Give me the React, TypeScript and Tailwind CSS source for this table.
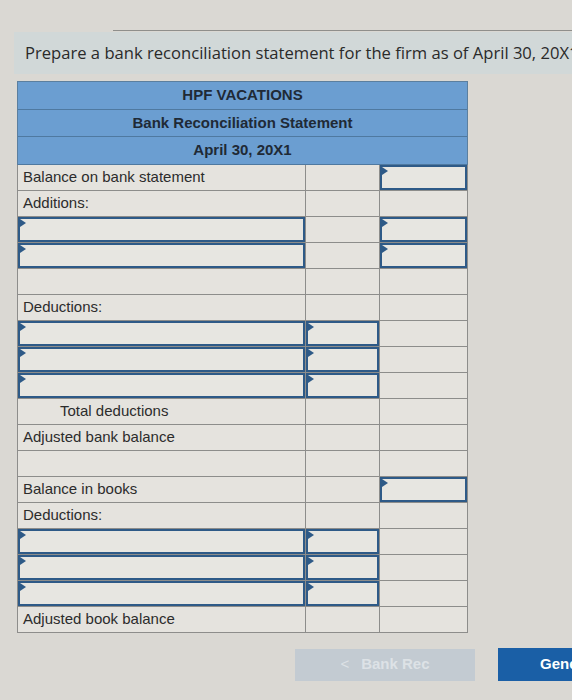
import React from "react";

type Row = {
    label?: string;
    indent?: boolean;
    a?: boolean;
    b?: boolean;
    c?: boolean;
};

const rows: Row[] = [
    { label: "Balance on bank statement", c: true },
    { label: "Additions:" },
    { a: true, c: true },
    { a: true, c: true },
    {},
    { label: "Deductions:" },
    { a: true, b: true },
    { a: true, b: true },
    { a: true, b: true },
    { label: "Total deductions", indent: true },
    { label: "Adjusted bank balance" },
    {},
    { label: "Balance in books", c: true },
    { label: "Deductions:" },
    { a: true, b: true },
    { a: true, b: true },
    { a: true, b: true },
    { label: "Adjusted book balance" },
];

function InputBox() {
    return (
        <div className="relative h-full w-full border-2 border-[#2e5a87] bg-[#e7e6e1]">
            <span className="absolute left-0 top-0 h-0 w-0 border-y-[4px] border-l-[6px] border-y-transparent border-l-[#2e5a87]" />
        </div>
    );
}

function Cell({ input, children, className }: { input?: boolean; children?: React.ReactNode; className?: string }) {
    return (
        <div className={"h-[26px] border-b border-r border-[#8d8d8b] " + (className ?? "")}>
            {input ? <InputBox /> : children}
        </div>
    );
}

export default function App() {
    return (
        <div
            className="relative h-[700px] w-[572px] overflow-hidden bg-[#dad8d3] text-[#2c2c2c]"
            style={{ fontFamily: '"Liberation Sans", Arial, sans-serif' }}
        >
            <div className="ml-[113px] h-[31px] border-b border-[#8f8f8c]" />
            <div className="ml-[14px] mt-[1px] flex h-[42px] items-center bg-[#d1d8d8] pl-[11px]">
                <p className="whitespace-nowrap text-[16.6px] text-[#2a2a2a]" style={{ fontFamily: '"Open Sans", sans-serif' }}>
                    Prepare a bank reconciliation statement for the firm as of April 30, 20X1
                </p>
            </div>

            <div className="ml-[17px] mt-[7px] w-[451px]">
                <div className="border border-b-0 border-[#5b7f9f] bg-[#6b9ed1] text-[15px] font-bold text-[#1f2a36]">
                    <div className="flex h-[28px] items-center justify-center border-b border-[#4f79a0]">HPF VACATIONS</div>
                    <div className="flex h-[27px] items-center justify-center border-b border-[#4f79a0]">Bank Reconciliation Statement</div>
                    <div className="flex h-[28px] items-center justify-center border-b border-[#4f79a0]">April 30, 20X1</div>
                </div>
                <div className="border-l border-[#8d8d8b] bg-[#e5e3de] text-[15px]">
                    {rows.map((r, i) => (
                        <div key={i} className="grid grid-cols-[288px_74px_88px]">
                            <Cell input={r.a} className="flex items-center">
                                {r.label && (
                                    <span className={r.indent ? "pl-[42px]" : "pl-[5px]"}>{r.label}</span>
                                )}
                            </Cell>
                            <Cell input={r.b} />
                            <Cell input={r.c} />
                        </div>
                    ))}
                </div>
            </div>

            <div className="mt-[15px] flex items-center">
                <button className="ml-[295px] flex h-[32px] w-[180px] shrink-0 items-center justify-center gap-3 bg-[#c3cbd2] text-[15px] font-bold text-[#dde2e6]">
                    <span className="font-normal">&lt;</span>
                    <span>Bank Rec</span>
                </button>
                <button className="ml-[23px] flex h-[33px] w-[150px] shrink-0 items-center justify-start whitespace-nowrap bg-[#1a5fa6] pl-[42px] text-[15px] font-bold text-white">
                    General Journal
                </button>
            </div>
        </div>
    );
}
